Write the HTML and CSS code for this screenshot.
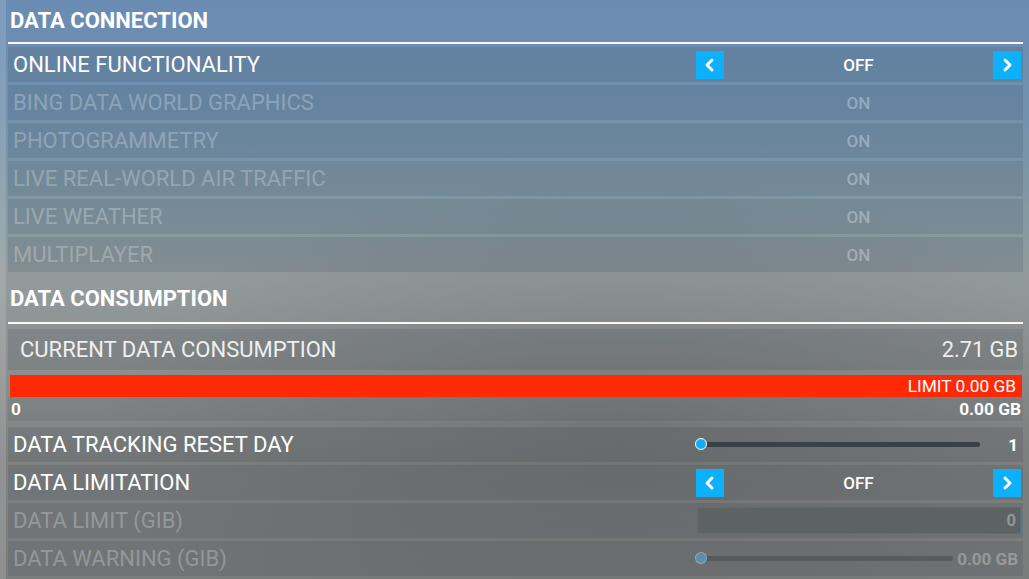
FILE: index.html
```html
<!DOCTYPE html>
<html>
<head>
<meta charset="utf-8">
<link rel="stylesheet" href="styles.css">
</head>
<body>
<div class="page">
  <div class="panel">
    <div class="heading">DATA CONNECTION</div>

    <div class="row">
      <div class="label">ONLINE FUNCTIONALITY</div>
      <div class="control toggle">
        <button class="arrow"><svg viewBox="0 0 28 28" width="28" height="28"><polyline points="16,9 11,14 16,19" fill="none" stroke="#fff" stroke-width="3" stroke-linecap="round" stroke-linejoin="round"/></svg></button>
        <span class="value">OFF</span>
        <button class="arrow"><svg viewBox="0 0 28 28" width="28" height="28"><polyline points="12,9 17,14 12,19" fill="none" stroke="#fff" stroke-width="3" stroke-linecap="round" stroke-linejoin="round"/></svg></button>
      </div>
    </div>
    <div class="row disabled">
      <div class="label">BING DATA WORLD GRAPHICS</div>
      <div class="control toggle"><span class="value">ON</span></div>
    </div>
    <div class="row disabled">
      <div class="label">PHOTOGRAMMETRY</div>
      <div class="control toggle"><span class="value">ON</span></div>
    </div>
    <div class="row disabled">
      <div class="label">LIVE REAL-WORLD AIR TRAFFIC</div>
      <div class="control toggle"><span class="value">ON</span></div>
    </div>
    <div class="row disabled">
      <div class="label">LIVE WEATHER</div>
      <div class="control toggle"><span class="value">ON</span></div>
    </div>
    <div class="row disabled">
      <div class="label">MULTIPLAYER</div>
      <div class="control toggle"><span class="value">ON</span></div>
    </div>

    <div class="heading second">DATA CONSUMPTION</div>

    <div class="row tall">
      <div class="label">CURRENT DATA CONSUMPTION</div>
      <div class="amount">2.71 GB</div>
    </div>
    <div class="usage">
      <div class="usage-bar">LIMIT 0.00 GB</div>
      <div class="usage-scale"><span>0</span><span>0.00 GB</span></div>
    </div>

    <div class="row">
      <div class="label">DATA TRACKING RESET DAY</div>
      <div class="control slider">
        <div class="track"><span class="knob"></span></div>
        <span class="slider-value">1</span>
      </div>
    </div>
    <div class="row">
      <div class="label">DATA LIMITATION</div>
      <div class="control toggle">
        <button class="arrow"><svg viewBox="0 0 28 28" width="28" height="28"><polyline points="16,9 11,14 16,19" fill="none" stroke="#fff" stroke-width="3" stroke-linecap="round" stroke-linejoin="round"/></svg></button>
        <span class="value">OFF</span>
        <button class="arrow"><svg viewBox="0 0 28 28" width="28" height="28"><polyline points="12,9 17,14 12,19" fill="none" stroke="#fff" stroke-width="3" stroke-linecap="round" stroke-linejoin="round"/></svg></button>
      </div>
    </div>
    <div class="row disabled">
      <div class="label">DATA LIMIT (GIB)</div>
      <div class="control">
        <div class="input">0</div>
      </div>
    </div>
    <div class="row disabled">
      <div class="label">DATA WARNING (GIB)</div>
      <div class="control slider faded">
        <div class="track short"><span class="knob"></span></div>
        <span class="slider-value wide">0.00 GB</span>
      </div>
    </div>
  </div>
</div>
</body>
</html>
```

FILE: styles.css
```css
html, body {
  margin: 0;
  padding: 0;
  height: 100%;
}

body {
  font-family: Roboto, "Liberation Sans", sans-serif;
  color: #fff;
  background:
    radial-gradient(ellipse 520px 260px at 620px 430px, rgba(60,62,62,0.22), rgba(60,62,62,0) 100%),
    linear-gradient(180deg, #6a8cb3 0px, #7191ae 110px, #8198a4 200px, #929b9c 280px, #8c908f 360px, #7f8281 460px, #7c7e7e 579px);
  overflow: hidden;
}

.page {
  height: 579px;
  border-left: 6px solid rgba(255,255,255,0.14);
  box-sizing: border-box;
}

.panel {
  padding: 0 6px 0 2px;
  display: flex;
  flex-direction: column;
}

.heading {
  height: 44px;
  box-sizing: border-box;
  display: flex;
  align-items: flex-end;
  padding: 0 0 8px 2px;
  font-size: 22px;
  line-height: 26px;
  font-weight: 700;
  border-bottom: 2px solid rgba(255,255,255,0.95);
  margin-bottom: 3px;
}

.heading.second {
  margin-top: 5px;
  padding-bottom: 10px;
}

.row {
  height: 35px;
  margin-bottom: 3px;
  display: flex;
  align-items: center;
  background: rgba(20,30,45,0.11);
}

.row.tall {
  height: 41px;
  margin-top: 2px;
  margin-bottom: 5px;
}

.label {
  padding-left: 5px;
  font-size: 22px;
  color: #fff;
  white-space: nowrap;
}

.row.tall .label {
  padding-left: 12px;
  color: #eef0f0;
}

.amount {
  margin-left: auto;
  padding-right: 5px;
  font-size: 21.8px;
  color: #eef0f0;
}

.disabled .label {
  color: rgba(255,255,255,0.27);
}

.control {
  margin-left: auto;
  width: 325px;
  margin-right: 2px;
  display: flex;
  align-items: center;
}

.toggle {
  justify-content: center;
  height: 28px;
}

.arrow {
  width: 28px;
  height: 28px;
  border: 0;
  padding: 0;
  background: #0db0fb;
  display: flex;
  align-items: center;
  justify-content: center;
}

.toggle .arrow:first-child {
  margin-right: auto;
}

.toggle .arrow:last-child {
  margin-left: auto;
}

.value {
  font-size: 17px;
  font-weight: 500;
  color: #fff;
}

.disabled .value {
  color: rgba(255,255,255,0.32);
}

.usage {
  display: flex;
  flex-direction: column;
  margin-bottom: 6px;
}

.usage-bar {
  height: 22px;
  margin: 0 1px 0 2px;
  background: #ff2a05;
  color: #fff;
  font-size: 17.3px;
  line-height: 22px;
  text-align: right;
  padding-right: 6px;
}

.usage-scale {
  height: 24px;
  display: flex;
  justify-content: space-between;
  align-items: center;
  padding: 0 2px 0 3px;
  font-size: 17.3px;
  font-weight: 700;
  background: rgba(20,30,40,0.07);
}

.slider {
  height: 28px;
}

.track {
  position: relative;
  margin-left: 5px;
  width: 279px;
  height: 5px;
  background: #394049;
  border-radius: 2px;
}

.track.short {
  width: 252px;
}

.knob {
  position: absolute;
  left: -6px;
  top: -4px;
  width: 10px;
  height: 10px;
  border-radius: 50%;
  background: #10aef5;
  border: 1.5px solid #fff;
}

.slider-value {
  margin-left: auto;
  padding-right: 3px;
  font-size: 17px;
  font-weight: 700;
}

.faded .track {
  background: rgba(60,66,72,0.45);
}

.faded .knob {
  background: #5c8fa8;
  border-color: rgba(160,180,190,0.7);
}

.faded .slider-value {
  color: rgba(255,255,255,0.28);
}

.input {
  width: 100%;
  height: 27px;
  box-sizing: border-box;
  margin-left: 1px;
  background: #5d6263;
  border: 1px solid #4f7283;
  color: rgba(255,255,255,0.35);
  font-size: 16.5px;
  font-weight: 700;
  text-align: right;
  line-height: 25px;
  padding-right: 4px;
}
```
